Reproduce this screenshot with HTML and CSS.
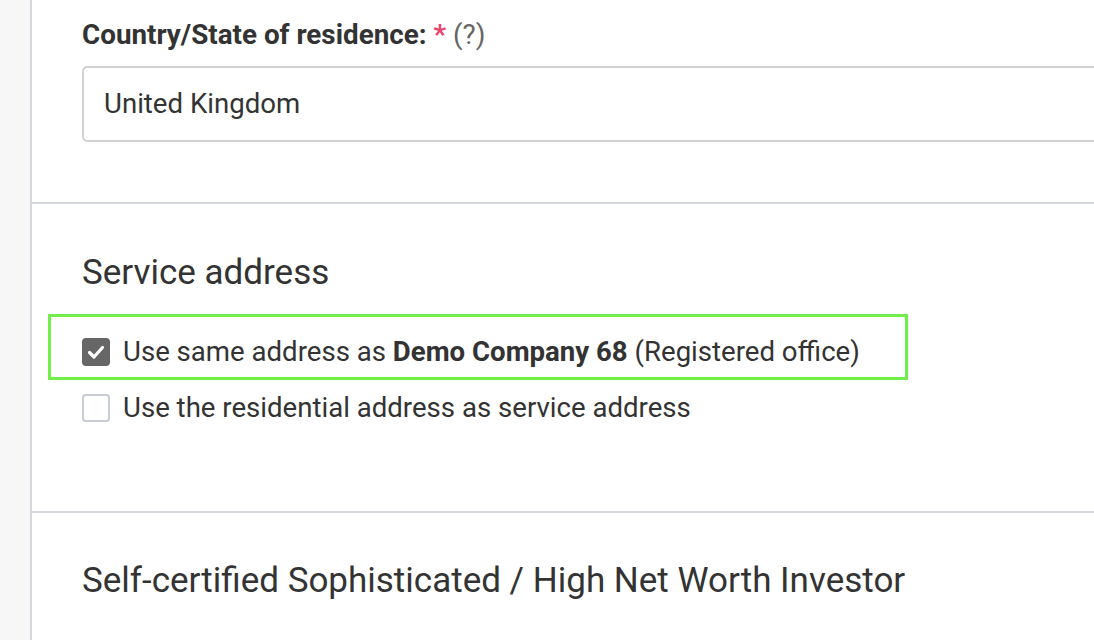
FILE: index.html
```html
<!DOCTYPE html>
<html lang="en">
<head>
<meta charset="utf-8">
<title>Officer details</title>
<link rel="stylesheet" href="styles.css">
</head>
<body>
<div class="page">
  <aside class="rail"></aside>
  <main class="main">
    <section class="section section-residence">
      <div class="field-label">Country/State of residence: <span class="req">*</span> <span class="help">(?)</span></div>
      <div class="input">United Kingdom</div>
    </section>

    <section class="section section-service">
      <h2 class="section-title">Service address</h2>
      <div class="options">
        <label class="option option-highlight">
          <span class="box box-checked">
            <svg viewBox="0 0 28 28" width="28" height="28" aria-hidden="true"><path d="M7.5 14.5 L12 19 L20.5 9.5" fill="none" stroke="#fff" stroke-width="3.2" stroke-linecap="round" stroke-linejoin="round"/></svg>
          </span>
          <span class="option-text">Use same address as <strong>Demo Company 68</strong> (Registered office)</span>
        </label>
        <label class="option">
          <span class="box"></span>
          <span class="option-text">Use the residential address as service address</span>
        </label>
      </div>
    </section>

    <section class="section section-investor">
      <h2 class="section-title">Self-certified Sophisticated / High Net Worth Investor</h2>
    </section>
  </main>
</div>
</body>
</html>
```

FILE: styles.css
```css
html, body {
  margin: 0;
  padding: 0;
  height: 100%;
  overflow: hidden;
  background: #ffffff;
}

body {
  font-family: Roboto, "Liberation Sans", sans-serif;
  color: #333333;
}

.page {
  display: flex;
  min-height: 640px;
}

.rail {
  width: 30px;
  flex: 0 0 30px;
  background: #f7f7f7;
  border-right: 2px solid #d3d7dc;
}

.main {
  flex: 1;
  min-width: 0;
  overflow: hidden;
}

.section {
  padding-left: 50px;
  border-bottom: 2px solid #d3d7dc;
}

.section-residence {
  padding-top: 15px;
  padding-bottom: 60px;
}

.field-label {
  font-size: 27.8px;
  line-height: 40px;
  font-weight: 700;
  color: #333333;
  white-space: nowrap;
}

.req {
  color: #e8456d;
  font-weight: 700;
}

.help {
  color: #666666;
  font-weight: 400;
}

.input {
  margin-top: 11px;
  width: 1080px;
  height: 72px;
  box-sizing: content-box;
  border: 2px solid #d2d2d2;
  border-radius: 5px;
  padding: 0 20px;
  font-size: 27.6px;
  line-height: 72px;
  color: #333333;
}

.section-service {
  padding-top: 47px;
  padding-bottom: 83px;
}

.section-title {
  margin: 0;
  font-size: 35px;
  line-height: 44px;
  font-weight: 400;
  color: #333333;
  white-space: nowrap;
}

.options {
  margin-top: 37px;
  display: flex;
  flex-direction: column;
  gap: 16px;
}

.option {
  position: relative;
  display: flex;
  align-items: center;
  gap: 13px;
  font-size: 27.6px;
  line-height: 40px;
  white-space: nowrap;
  align-self: flex-start;
}

.option strong {
  font-weight: 700;
}

.option-highlight::after {
  content: "";
  position: absolute;
  left: -34px;
  top: -18px;
  width: 854px;
  height: 60px;
  border: 3px solid #72ee4b;
  pointer-events: none;
}

.box {
  width: 24px;
  height: 24px;
  flex: 0 0 24px;
  border: 2px solid #c8cdd5;
  border-radius: 4px;
  background: #ffffff;
  display: flex;
  align-items: center;
  justify-content: center;
}

.box-checked {
  width: 28px;
  height: 28px;
  flex: 0 0 28px;
  border: 0;
  background: #666666;
}

.box-checked svg {
  display: block;
}

.section-investor {
  padding-top: 46px;
  border-bottom: 0;
}
```
